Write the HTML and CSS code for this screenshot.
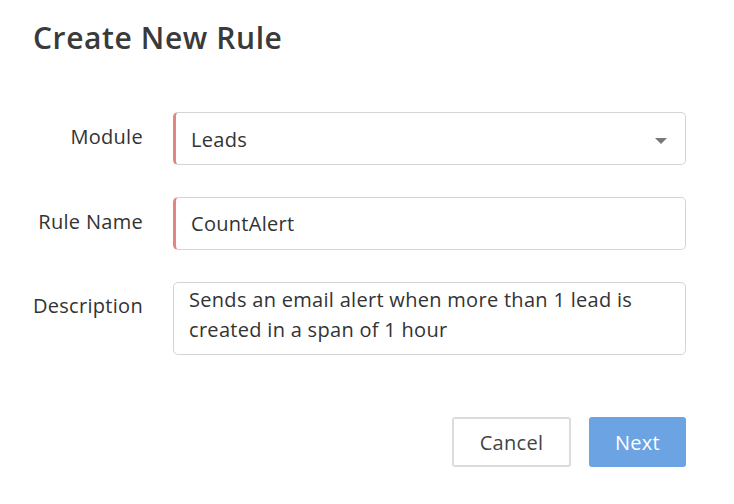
FILE: index.html
```html
<!DOCTYPE html>
<html>
<head>
    <meta charset="utf-8">
    <title>Create New Rule</title>
    <link rel="stylesheet" href="styles.css">
</head>
<body>
    <div class="dialog">
        <h1>Create New Rule</h1>

        <div class="rule-form">
            <label class="field-label">Module</label>
            <div class="field mandatory select-field">
                <span>Leads</span>
                <span class="caret"></span>
            </div>

            <label class="field-label">Rule Name</label>
            <div class="field mandatory">CountAlert</div>

            <label class="field-label label-top">Description</label>
            <div class="field textarea-field">Sends an email alert when more than 1 lead is created in a span of 1 hour</div>
        </div>

        <div class="actions">
            <button class="btn cancel-btn">Cancel</button>
            <button class="btn next-btn">Next</button>
        </div>
    </div>
</body>
</html>
```

FILE: styles.css
```css
body {
    margin: 0;
    background: #fff;
    font-family: "Open Sans", Lato, sans-serif;
    letter-spacing: 0.3px;
    color: #333;
}

.dialog {
    width: 686px;
    padding: 19px 0 0 0;
}

h1 {
    margin: 0 0 0 33px;
    font-size: 30px;
    font-weight: 600;
    letter-spacing: 0.6px;
    line-height: 38px;
    color: #3a3a3a;
}

.rule-form {
    display: grid;
    grid-template-columns: 143px 513px;
    column-gap: 30px;
    row-gap: 32px;
    margin-top: 55px;
}

.field-label {
    text-align: right;
    font-size: 20px;
    color: #333;
    align-self: center;
    margin-top: -4px;
}

.label-top {
    align-self: start;
    margin-top: 0;
    padding-top: 10px;
}

.field {
    box-sizing: border-box;
    border: 1px solid #d4d4d4;
    border-radius: 5px;
    padding: 0 15px;
    height: 53px;
    display: flex;
    align-items: center;
    font-size: 20px;
    color: #333;
}

.mandatory {
    border-left: 3px solid #e2877e;
}

.select-field {
    justify-content: space-between;
    padding-right: 18px;
}

.select-field span:first-child {
    margin-top: 2px;
}

.caret {
    width: 0;
    height: 0;
    border-left: 6px solid transparent;
    border-right: 6px solid transparent;
    border-top: 6px solid #777;
    margin-top: 4px;
}

.textarea-field {
    height: 73px;
    align-items: flex-start;
    padding-top: 2px;
    line-height: 30px;
}

.actions {
    display: flex;
    justify-content: flex-end;
    gap: 18px;
    margin-top: 62px;
}

.btn {
    height: 50px;
    font-family: inherit;
    letter-spacing: 0.3px;
    font-size: 20px;
    border-radius: 3px;
    cursor: pointer;
}

.cancel-btn {
    width: 119px;
    background: #fff;
    color: #444;
    border: 2px solid #dcdcdc;
}

.next-btn {
    width: 97px;
    background: #6ba3e3;
    color: #fff;
    border: none;
}
```
